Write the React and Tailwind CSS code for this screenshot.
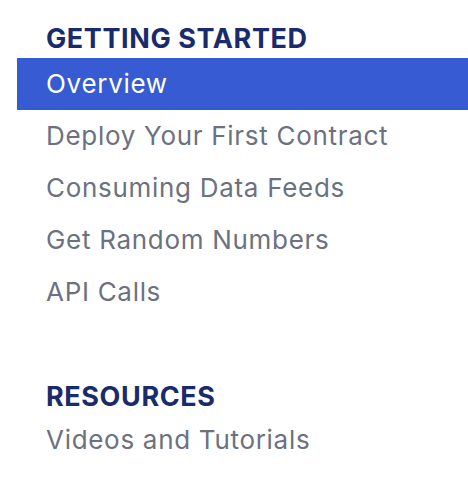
const sections = [
  {
    title: 'GETTING STARTED',
    items: ['Overview', 'Deploy Your First Contract', 'Consuming Data Feeds', 'Get Random Numbers', 'API Calls'],
    active: 'Overview',
  },
  {
    title: 'RESOURCES',
    items: ['Videos and Tutorials'],
  },
];

export default function App() {
  return (
    <div className="w-[468px] h-[498px] bg-white pl-[17px] pt-[23px] font-['Inter',sans-serif] overflow-hidden">
      {sections.map((section, i) => (
        <div key={section.title} className={i > 0 ? 'mt-[63px]' : ''}>
          <h2 className="pl-[29px] text-[27px] leading-[32px] font-bold text-[#1a2b6b] tracking-[0.6px]">
            {section.title}
          </h2>
          <ul className={i === 0 ? 'mt-[3px]' : 'mt-[1px]'}>
            {section.items.map(item => (
              <li
                key={item}
                className={
                  item === section.active
                    ? 'h-[52px] flex items-center pl-[29px] bg-[#375bd2] text-white text-[26px] leading-[32px] tracking-[0.7px]'
                    : 'h-[52px] flex items-center pl-[29px] text-[#6c7180] text-[26px] leading-[32px] tracking-[0.7px]'
                }
              >
                {item}
              </li>
            ))}
          </ul>
        </div>
      ))}
    </div>
  );
}
